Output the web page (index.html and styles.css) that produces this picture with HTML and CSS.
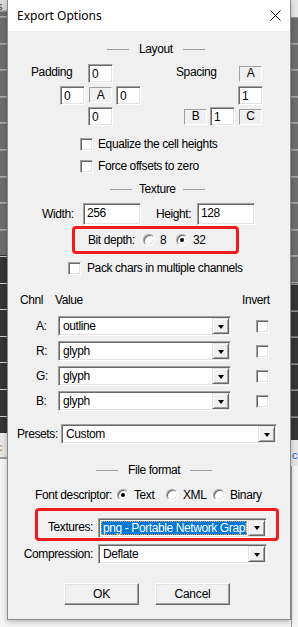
FILE: index.html
```html
<!DOCTYPE html>
<html lang="en">
<head>
    <meta charset="UTF-8">
    <meta name="viewport" content="width=device-width, initial-scale=1.0">
    <title>Export Options</title>
    <link rel="stylesheet" href="styles.css">
</head>
<body>
    <div class="screen">
        <div class="strip strip-left">
            <div class="seg seg-top"><span class="tiny">s</span></div>
            <div class="seg seg-grey"></div>
            <div class="seg seg-dark"></div>
            <div class="seg seg-pale"><span class="tiny orange">c</span></div>
            <div class="seg seg-rest"></div>
        </div>

        <div class="dialog">
            <div class="titlebar">
                <span class="title">Export Options</span>
                <svg class="close" width="11" height="11" viewBox="0 0 11 11">
                    <path d="M0.5 0.5 L10.5 10.5 M10.5 0.5 L0.5 10.5" stroke="#000" stroke-width="1" fill="none"/>
                </svg>
            </div>

            <div class="body">
                <div class="group-title gt-layout"><i class="rule"></i><span>Layout</span><i class="rule"></i></div>

                <div class="offsets">
                    <div class="cluster pad-cluster">
                        <span class="cl-label">Padding</span>
                        <span class="edit c3 r1">0</span>
                        <span class="edit c2 r2">0</span>
                        <span class="static-box c3 r2">A</span>
                        <span class="edit c4 r2">0</span>
                        <span class="edit c3 r3">0</span>
                    </div>
                    <div class="cluster spc-cluster">
                        <span class="cl-label">Spacing</span>
                        <span class="static-box c3 r1">A</span>
                        <span class="edit c3 r2">1</span>
                        <span class="static-box c1 r3 b-box">B</span>
                        <span class="edit c2 r3">1</span>
                        <span class="static-box c3 r3">C</span>
                    </div>
                </div>

                <div class="check-row cr-equalize"><span class="chk"></span><span>Equalize the cell heights</span></div>
                <div class="check-row cr-force"><span class="chk"></span><span>Force offsets to zero</span></div>

                <div class="group-title gt-texture"><i class="rule"></i><span>Texture</span><i class="rule"></i></div>

                <div class="size-row">
                    <span class="lbl-width">Width:</span>
                    <span class="edit size-edit">256</span>
                    <span class="lbl-height">Height:</span>
                    <span class="edit size-edit">128</span>
                </div>

                <div class="mark bit-box">
                    <span class="lbl-bits">Bit depth:</span>
                    <span class="radio"></span><span class="opt opt-8">8</span>
                    <span class="radio on"></span><span class="opt">32</span>
                </div>

                <div class="check-row cr-pack"><span class="chk"></span><span>Pack chars in multiple channels</span></div>

                <div class="chnl-head">
                    <span class="h-chnl">Chnl</span>
                    <span class="h-value">Value</span>
                    <span>Invert</span>
                </div>

                <div class="channels">
                    <div class="chan-row">
                        <span class="chan-lbl">A:</span>
                        <div class="combo chan-combo"><span class="val">outline</span><span class="drop"></span></div>
                        <span class="chk"></span>
                    </div>
                    <div class="chan-row">
                        <span class="chan-lbl">R:</span>
                        <div class="combo chan-combo"><span class="val">glyph</span><span class="drop"></span></div>
                        <span class="chk"></span>
                    </div>
                    <div class="chan-row">
                        <span class="chan-lbl">G:</span>
                        <div class="combo chan-combo"><span class="val">glyph</span><span class="drop"></span></div>
                        <span class="chk"></span>
                    </div>
                    <div class="chan-row">
                        <span class="chan-lbl">B:</span>
                        <div class="combo chan-combo"><span class="val">glyph</span><span class="drop"></span></div>
                        <span class="chk"></span>
                    </div>
                </div>

                <div class="presets-row">
                    <span class="lbl-presets">Presets:</span>
                    <div class="combo presets-combo"><span class="val">Custom</span><span class="drop"></span></div>
                </div>

                <div class="group-title gt-format"><i class="rule"></i><span>File format</span><i class="rule"></i></div>

                <div class="desc-row">
                    <span class="lbl-desc">Font descriptor:</span>
                    <span class="radio on"></span><span class="opt opt-text">Text</span>
                    <span class="radio"></span><span class="opt opt-xml">XML</span>
                    <span class="radio"></span><span class="opt opt-bin">Binary</span>
                </div>

                <div class="mark tex-box">
                    <span class="lbl-right">Textures:</span>
                    <div class="combo file-combo"><span class="val sel">png - Portable Network Graphics</span><span class="drop"></span></div>
                </div>

                <div class="comp-row">
                    <span class="lbl-right lbl-comp">Compression:</span>
                    <div class="combo file-combo"><span class="val">Deflate</span><span class="drop"></span></div>
                </div>

                <div class="buttons">
                    <button type="button" class="btn">OK</button>
                    <button type="button" class="btn">Cancel</button>
                </div>
            </div>
        </div>

        <div class="strip strip-right">
            <div class="seg seg-top-r"></div>
            <div class="seg seg-grey-r"></div>
            <div class="seg seg-dark-r"></div>
            <div class="seg seg-pale-r"><span class="tiny blue">c</span></div>
            <div class="seg seg-rest-r"></div>
        </div>
    </div>
</body>
</html>
```

FILE: styles.css
```css
* {
    box-sizing: border-box;
}
body {
    margin: 0;
    font-family: "Liberation Sans", Arial, sans-serif;
    font-size: 12px;
    letter-spacing: -0.4px;
    line-height: 13px;
    color: #000;
    background: #f4f4f4;
}
.screen {
    display: flex;
    width: 298px;
    height: 627px;
    overflow: hidden;
}

/* background windows peeking out on both sides */
.strip {
    width: 7px;
    flex: none;
    display: flex;
    flex-direction: column;
    overflow: hidden;
}
.seg {
    flex: none;
    overflow: hidden;
}
.tiny {
    display: block;
    font-size: 11px;
    line-height: 12px;
    margin-left: -3px;
    color: #333;
}
.orange {
    color: #d07a10;
}
.blue {
    color: #2060c0;
    margin-left: 1px;
}
.seg-top {
    height: 10px;
    background: #dadada;
}
.seg-grey {
    height: 245px;
    background: repeating-linear-gradient(to bottom, #d0d0d0 0 1px, #6c6c6c 1px 26.6px);
    background-position: 0 6.4px;
}
.seg-dark {
    height: 178px;
    background: repeating-linear-gradient(to bottom, #c8c8c8 0 1px, #353535 1px 26.6px);
    background-position: 0 1px;
}
.seg-pale {
    height: 24px;
    background: #e6e6e6;
    padding-top: 8px;
}
.seg-rest {
    flex: 1;
    background: linear-gradient(to bottom, #9a9a9a 0 2px, #f4f4f4 2px);
}
.seg-top-r {
    height: 17px;
    background: #e4e4e4;
}
.seg-grey-r {
    height: 266px;
    background: repeating-linear-gradient(to bottom, #d0d0d0 0 1px, #6c6c6c 1px 26.6px);
    background-position: 0 -0.6px;
}
.seg-dark-r {
    height: 157px;
    background: repeating-linear-gradient(to bottom, #c8c8c8 0 1px, #353535 1px 26.6px);
    background-position: 0 0.6px;
}
.seg-pale-r {
    height: 26px;
    background: #e6e6e6;
    padding-top: 9px;
}
.seg-rest-r {
    flex: 1;
    background: linear-gradient(to right, #9a9a9a 0 1px, #f4f4f4 1px);
}

/* dialog frame */
.dialog {
    width: 284px;
    height: 620px;
    flex: none;
    background: #f0f0f0;
    border: 1px solid #8a8a8a;
    border-top: none;
    box-shadow: 0 2px 5px rgba(0, 0, 0, 0.25);
    position: relative;
    z-index: 1;
}
.titlebar {
    height: 31px;
    background: #fff;
    display: flex;
    align-items: center;
    justify-content: space-between;
    padding: 0 9px 0 9px;
}
.title {
    font-family: "Noto Sans", "Open Sans", sans-serif;
    font-size: 12px;
    letter-spacing: 0;
    color: #000;
}
.body {
    padding-top: 12px;
}

/* etched group captions */
.group-title {
    display: flex;
    align-items: center;
    height: 12px;
    gap: 10px;
}
.group-title .rule {
    width: 22px;
    height: 1px;
    background: #a0a0a0;
}
.gt-layout {
    padding-left: 99px;
}
.gt-texture {
    margin-top: 10px;
    padding-left: 102px;
    gap: 7px;
}
.gt-format {
    margin-top: 20px;
    padding-left: 88px;
    gap: 10px;
}

/* win32 style controls */
.edit {
    display: block;
    background: #fff;
    border: 1px solid;
    border-color: #a0a0a0 #fff #fff #a0a0a0;
    box-shadow: inset 1px 1px #696969, inset -1px -1px #e3e3e3;
    padding: 3px 0 0 3px;
    white-space: nowrap;
}
.static-box {
    display: flex;
    align-items: center;
    justify-content: center;
    border: 1px solid;
    border-color: #a0a0a0 #fff #fff #a0a0a0;
    width: 23px;
    height: 16px;
    align-self: center;
    justify-self: center;
}
.chk {
    display: block;
    flex: none;
    width: 13px;
    height: 13px;
    background: #fff;
    border: 1px solid;
    border-color: #a0a0a0 #fff #fff #a0a0a0;
    box-shadow: inset 1px 1px #696969, inset -1px -1px #e3e3e3;
}
.radio {
    display: flex;
    align-items: center;
    justify-content: center;
    flex: none;
    width: 12px;
    height: 12px;
    border-radius: 50%;
    background: #fff;
    border: 1px solid;
    border-color: #a0a0a0 #fff #fff #a0a0a0;
    box-shadow: inset 1px 1px #696969, inset -1px -1px #e3e3e3;
}
.radio.on::after {
    content: "";
    width: 4px;
    height: 4px;
    border-radius: 50%;
    background: #000;
}
.opt {
    margin-left: 5px;
    white-space: nowrap;
}
.combo {
    display: flex;
    height: 20px;
    background: #fff;
    border: 1px solid;
    border-color: #a0a0a0 #fff #fff #a0a0a0;
    box-shadow: inset 1px 1px #696969, inset -1px -1px #e3e3e3;
    padding: 1px;
}
.combo .val {
    flex: 1;
    padding: 2px 0 0 3px;
    white-space: nowrap;
    overflow: hidden;
}
.combo .val.sel {
    margin: 1px;
    padding: 1px 0 0 2px;
    background: #0078d7;
    color: #fff;
    outline: 1px dotted #f0a040;
    outline-offset: -1px;
}
.drop {
    display: flex;
    align-items: center;
    justify-content: center;
    flex: none;
    width: 17px;
    height: 16px;
    background: #f0f0f0;
    border: 1px solid;
    border-color: #e3e3e3 #696969 #696969 #e3e3e3;
    box-shadow: inset 1px 1px #fff, inset -1px -1px #a0a0a0;
}
.drop::after {
    content: "";
    border-left: 3.5px solid transparent;
    border-right: 3.5px solid transparent;
    border-top: 4px solid #000;
    margin-top: 1px;
}

/* layout offsets */
.offsets {
    display: flex;
    margin-top: 9px;
    padding-left: 24px;
}
.cluster {
    display: grid;
    grid-template-rows: 19px 19px 19px;
    row-gap: 2.5px;
    column-gap: 3px;
}
.pad-cluster {
    grid-template-columns: 25px 25px 25px 25px;
}
.spc-cluster {
    margin-left: 35px;
    grid-template-columns: 31px 25px 25px;
}
.cl-label {
    grid-row: 1;
    grid-column: 1 / 3;
    align-self: center;
    margin-left: -1px;
    margin-top: -3px;
}
.spc-cluster .cl-label {
    margin-left: 0;
    margin-top: -2px;
}
.c1 { grid-column: 1; }
.c2 { grid-column: 2; }
.c3 { grid-column: 3; }
.c4 { grid-column: 4; }
.r1 { grid-row: 1; }
.r2 { grid-row: 2; }
.r3 { grid-row: 3; }
.b-box {
    justify-self: end;
}

.check-row {
    display: flex;
    align-items: center;
    gap: 5px;
    height: 13px;
    white-space: nowrap;
}
.cr-equalize {
    margin-top: 12px;
    padding-left: 72px;
}
.cr-force {
    margin-top: 9px;
    padding-left: 72px;
}
.cr-pack {
    margin-top: 8px;
    padding-left: 60px;
    gap: 6px;
}

.size-row {
    display: flex;
    align-items: center;
    height: 22px;
    margin-top: 8px;
    padding-left: 34px;
}
.lbl-width {
    width: 41px;
}
.lbl-height {
    width: 41px;
    margin-left: 15px;
}
.size-edit {
    width: 58px;
    height: 22px;
    padding-top: 3px;
}

.mark {
    border: 3px solid #ee1d1d;
    border-radius: 4px;
    display: flex;
    align-items: center;
}
.bit-box {
    margin: 1px 0 0 64px;
    width: 167px;
    height: 28px;
    padding-left: 13px;
}
.lbl-bits {
    width: 55px;
}
.opt-8 {
    width: 16px;
}

.chnl-head {
    display: flex;
    height: 12px;
    margin-top: 19px;
    padding-left: 12px;
}
.h-chnl {
    width: 35px;
}
.h-value {
    width: 187px;
}

.channels {
    margin-top: 10px;
    display: flex;
    flex-direction: column;
    gap: 5px;
}
.chan-row {
    display: flex;
    align-items: center;
    height: 20px;
    padding-left: 20px;
}
.chan-lbl {
    width: 30px;
    padding-left: 8px;
}
.chan-combo {
    width: 173px;
    margin-right: 25px;
}

.presets-row {
    display: flex;
    align-items: center;
    margin-top: 13px;
    padding-left: 9px;
}
.lbl-presets {
    width: 44px;
    white-space: nowrap;
}
.presets-combo {
    width: 216px;
}

.desc-row {
    display: flex;
    align-items: center;
    height: 12px;
    margin-top: 13px;
    padding-left: 27px;
}
.lbl-desc {
    width: 82px;
    white-space: nowrap;
}
.opt-text {
    width: 32px;
}
.opt-xml {
    width: 30px;
}

.tex-box {
    margin: 7px 0 0 27px;
    width: 244px;
    height: 33px;
    padding-top: 6px;
}
.lbl-right {
    width: 55px;
    margin-right: 5px;
    text-align: right;
    white-space: nowrap;
}
.file-combo {
    width: 169px;
}
.comp-row {
    display: flex;
    align-items: center;
    margin-top: 3px;
    padding-left: 12px;
}
.lbl-comp {
    width: 73px;
}

.buttons {
    display: flex;
    gap: 16px;
    margin-top: 19px;
    padding-left: 56px;
}
.btn {
    width: 75px;
    height: 22px;
    padding: 0;
    font-family: "Liberation Sans", Arial, sans-serif;
    font-size: 12px;
    letter-spacing: -0.2px;
    color: #000;
    background: #f0f0f0;
    border: 1px solid;
    border-color: #fff #696969 #696969 #fff;
    box-shadow: inset -1px -1px #a0a0a0, inset 1px 1px #e3e3e3;
}
```
